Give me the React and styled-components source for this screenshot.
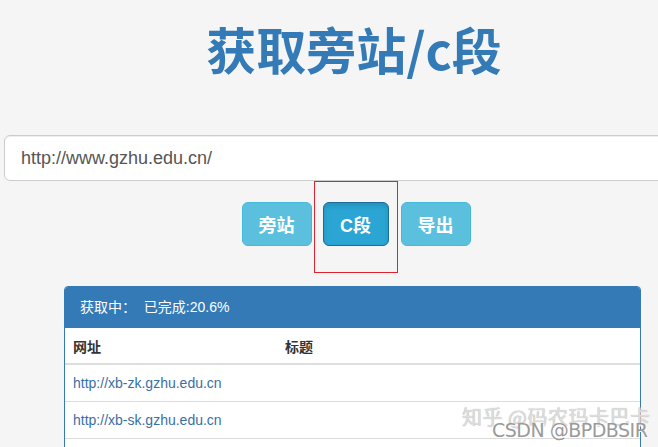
import React from "react";
import styled, { createGlobalStyle } from "styled-components";

const Global = createGlobalStyle`
  html, body {
    margin: 0;
    padding: 0;
    background: #f5f5f5;
    overflow: hidden;
  }
  body {
    font-family: "Liberation Sans", "Noto Sans CJK SC", sans-serif;
    color: #333;
  }
`;

const rows = ["http://xb-zk.gzhu.edu.cn", "http://xb-sk.gzhu.edu.cn", ""];

const App = () => {
  return (
    <Page>
      <Global />
      <Container>
        <Title>获取旁站/c段</Title>
        <UrlInput defaultValue="http://www.gzhu.edu.cn/" />
        <Buttons>
          <Btn>旁站</Btn>
          <Marked>
            <Btn active>C段</Btn>
          </Marked>
          <Btn>导出</Btn>
        </Buttons>
        <Panel>
          <PanelHead>获取中：&nbsp;&nbsp;已完成:20.6%</PanelHead>
          <Table>
            <thead>
              <tr>
                <Th style={{ width: 196 }}>网址</Th>
                <Th>标题</Th>
              </tr>
            </thead>
            <tbody>
              {rows.map((r, i) => (
                <tr key={i}>
                  <Td>{r}</Td>
                  <Td></Td>
                </tr>
              ))}
            </tbody>
          </Table>
        </Panel>
      </Container>
      <Mark1>知乎 @码农玛卡巴卡</Mark1>
      <Mark2>CSDN @BPDBSIR</Mark2>
    </Page>
  );
};

export default App;

const Page = styled.div`
  position: relative;
  width: 658px;
  height: 447px;
  overflow: hidden;
`;
const Container = styled.div`
  width: 700px;
  margin-left: 4px;
  display: flex;
  flex-direction: column;
`;
const Title = styled.h1`
  margin: 15px 0 0;
  text-align: center;
  font-family: "Noto Sans CJK SC", sans-serif;
  font-weight: 700;
  font-size: 50px;
  line-height: 66px;
  color: #337ab7;
`;
const UrlInput = styled.input`
  margin-top: 54px;
  box-sizing: border-box;
  width: 700px;
  height: 46px;
  padding: 0 16px;
  border: 1px solid #ccc;
  border-radius: 6px;
  background: #fff;
  font-family: "Liberation Sans", sans-serif;
  font-size: 18px;
  color: #555;
  outline: none;
  box-shadow: inset 0 1px 1px rgba(0, 0, 0, 0.075);
`;
const Buttons = styled.div`
  display: flex;
  justify-content: center;
  align-items: flex-start;
  margin-left: 4px;
  height: 92px;
`;
const Marked = styled.div`
  box-sizing: border-box;
  width: 84px;
  height: 92px;
  border: 1px solid #e0222e;
  display: flex;
  justify-content: center;
  padding-top: 20px;
  margin: 0 3px 0 2px;
`;
const Btn = styled.button`
  box-sizing: border-box;
  width: ${(p) => (p.active ? "66px" : "70px")};
  height: 44px;
  margin-top: ${(p) => (p.active ? "0" : "21px")};
  border-radius: 6px;
  border: 1px solid ${(p) => (p.active ? "#1b6d99" : "#46b8da")};
  background: ${(p) => (p.active ? "#2aa5d4" : "#5bc0de")};
  color: #fff;
  font-family: "Liberation Sans", "Noto Sans CJK SC", sans-serif;
  font-weight: 700;
  font-size: 18px;
  padding: 0;
  box-shadow: ${(p) => (p.active ? "inset 0 3px 5px rgba(0,0,0,0.125)" : "none")};
`;
const Panel = styled.div`
  margin: 13px 63px 0 60px;
  border: 1px solid #337ab7;
  border-radius: 4px;
  background: #fff;
  overflow: hidden;
`;
const PanelHead = styled.div`
  background: #337ab7;
  color: #fff;
  height: 41px;
  line-height: 41px;
  padding-left: 15px;
  font-size: 14px;
  font-family: "Liberation Sans", "Noto Sans CJK SC", sans-serif;
`;
const Table = styled.table`
  width: 100%;
  border-collapse: collapse;
  font-size: 14px;
`;
const Th = styled.th`
  text-align: left;
  font-weight: 700;
  height: 35px;
  padding: 0 8px;
  border-bottom: 2px solid #ddd;
  color: #333;
`;
const Td = styled.td`
  height: 36px;
  padding: 0 8px;
  border-bottom: 1px solid #ddd;
  color: #3a6fa5;
`;
const Mark1 = styled.div`
  position: absolute;
  left: 462px;
  top: 402px;
  font-family: "Noto Sans CJK SC", sans-serif;
  font-size: 20px;
  color: #ddd;
  text-shadow: 0 0 1px #aaa;
  white-space: nowrap;
  letter-spacing: 0.5px;
`;
const Mark2 = styled.div`
  position: absolute;
  left: 492px;
  top: 419px;
  font-family: "DejaVu Sans", sans-serif;
  font-size: 19px;
  color: #9a9a9a;
  text-shadow: 1px 1px 0 #fff;
  white-space: nowrap;
  letter-spacing: -0.5px;
`;
